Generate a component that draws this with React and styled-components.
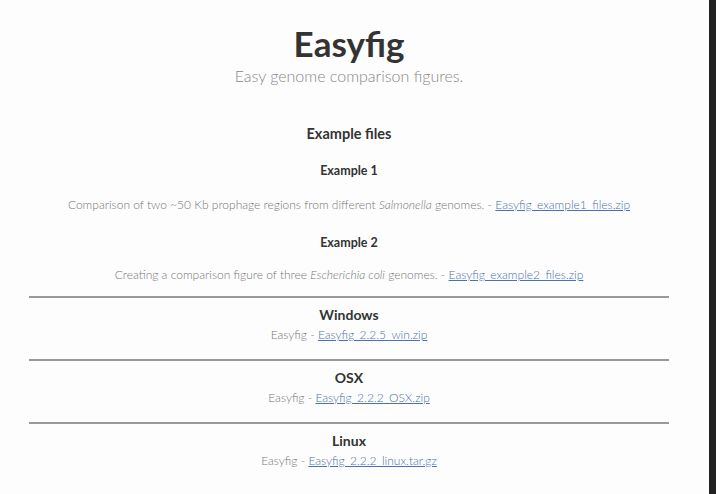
import React from "react";
import styled, { createGlobalStyle } from "styled-components";

const GlobalStyle = createGlobalStyle`
  html, body {
    margin: 0;
    padding: 0;
    background: #fdfdfd;
  }
  body {
    font-family: Lato, "Liberation Sans", sans-serif;
    color: #777;
  }
`;

const downloads = [
  { os: "Windows", file: "Easyfig_2.2.5_win.zip" },
  { os: "OSX", file: "Easyfig_2.2.2_OSX.zip" },
  { os: "Linux", file: "Easyfig_2.2.2_linux.tar.gz" },
];

const App = () => {
  return (
    <Page>
      <GlobalStyle />
      <Main>
        <Container>
          <Header>
            <Title>Easyfig</Title>
            <Subtitle>Easy genome comparison figures.</Subtitle>
          </Header>

          <SectionTitle>Example files</SectionTitle>

          <ExampleTitle>Example 1</ExampleTitle>
          <Text>
            Comparison of two ~50 Kb prophage regions from different{" "}
            <em>Salmonella</em> genomes. -{" "}
            <Link href="#">Easyfig_example1_files.zip</Link>
          </Text>

          <ExampleTitle $gap={15}>Example 2</ExampleTitle>
          <Text>
            Creating a comparison figure of three <em>Escherichia coli</em>{" "}
            genomes. - <Link href="#">Easyfig_example2_files.zip</Link>
          </Text>

          {downloads.map((d) => (
            <Download key={d.os}>
              <OsTitle>{d.os}</OsTitle>
              <DownloadLine>
                Easyfig - <Link href="#">{d.file}</Link>
              </DownloadLine>
            </Download>
          ))}
        </Container>
      </Main>
      <Gutter />
      <Scrollbar />
    </Page>
  );
};

const Page = styled.div`
  display: flex;
  min-height: 494px;
`;

const Main = styled.main`
  width: 698px;
  flex-shrink: 0;
`;

const Gutter = styled.div`
  flex: 1;
`;

const Scrollbar = styled.div`
  width: 7px;
  background: #222;
`;

const Container = styled.div`
  width: 640px;
  margin: 0 auto;
  text-align: center;
`;

const Header = styled.header`
  padding-top: 21px;
  margin-bottom: 37px;
`;

const Title = styled.h1`
  margin: 0;
  font-size: 35px;
  line-height: 44px;
  font-weight: 700;
  color: #333;
`;

const Subtitle = styled.p`
  margin: 0;
  font-size: 16px;
  line-height: 22px;
  font-weight: 300;
  color: #888;
`;

const SectionTitle = styled.h2`
  margin: 0 0 19px;
  font-size: 14.5px;
  line-height: 20px;
  font-weight: 700;
  color: #333;
`;

const ExampleTitle = styled.h3`
  margin: 0 0 ${(p) => p.$gap ?? 17}px;
  font-size: 12.5px;
  line-height: 16px;
  font-weight: 700;
  color: #333;
`;

const Text = styled.p`
  margin: 0 0 21px;
  font-size: 12px;
  line-height: 18px;
  font-weight: 300;
  color: #777;

  &:last-of-type {
    margin-bottom: 12px;
  }
`;

const Link = styled.a`
  color: #4a72ad;
  text-decoration: underline;
`;

const Download = styled.section`
  border-top: 2px solid #999;
  padding: 7px 0 14px;
`;

const OsTitle = styled.h3`
  margin: 0;
  font-size: 14px;
  line-height: 20px;
  font-weight: 700;
  color: #333;
`;

const DownloadLine = styled.p`
  margin: 0;
  font-size: 12px;
  line-height: 20px;
  font-weight: 300;
  color: #777;
`;

export default App;
